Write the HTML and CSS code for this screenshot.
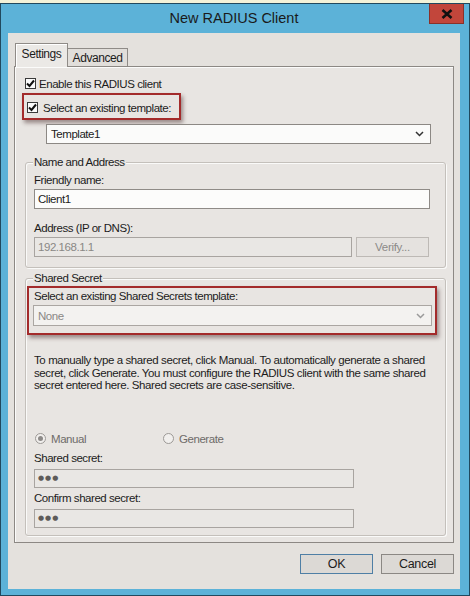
FILE: index.html
```html
<!DOCTYPE html>
<html>
<head>
<meta charset="utf-8">
<link rel="stylesheet" href="styles.css">
</head>
<body>
<div class="window">
  <div class="titlebar">
    <span class="title">New RADIUS Client</span>
    <div class="close"><svg width="12" height="10" viewBox="0 0 12 10"><path d="M1.5 1 L10.5 9 M10.5 1 L1.5 9" stroke="#111" stroke-width="2.6" fill="none"/></svg></div>
  </div>
  <div class="client">
    <div class="tabs">
      <div class="tab active">Settings</div>
      <div class="tab">Advanced</div>
    </div>
    <div class="panel">
      <div class="check row1"><span class="cb"><svg width="9" height="9" viewBox="0 0 9 9"><path d="M1 4.5 L3.5 7 L8 1.5" stroke="#111" stroke-width="2" fill="none"/></svg></span><span>Enable this RADIUS client</span></div>
      <div class="hl hl1">
        <div class="check"><span class="cb"><svg width="9" height="9" viewBox="0 0 9 9"><path d="M1 4.5 L3.5 7 L8 1.5" stroke="#111" stroke-width="2" fill="none"/></svg></span><span>Select an existing template:</span></div>
      </div>
      <div class="select sel1"><span>Template1</span><svg width="9" height="6" viewBox="0 0 9 6"><path d="M1 1 L4.5 4.5 L8 1" stroke="#333" stroke-width="1.5" fill="none"/></svg></div>

      <div class="group g1">
        <div class="legend">Name and Address</div>
        <div class="lbl lbl-first">Friendly name:</div>
        <div class="input in-name">Client1</div>
        <div class="lbl lbl-addr">Address (IP or DNS):</div>
        <div class="addr-row">
          <div class="input disabled in-addr">192.168.1.1</div>
          <div class="btn disabled verify">Verify...</div>
        </div>
      </div>

      <div class="group g2">
        <div class="legend">Shared Secret</div>
        <div class="hl hl2">
          <div class="lbl">Select an existing Shared Secrets template:</div>
          <div class="select disabled sel2"><span>None</span><svg width="9" height="6" viewBox="0 0 9 6"><path d="M1 1 L4.5 4.5 L8 1" stroke="#9a9a9a" stroke-width="1.5" fill="none"/></svg></div>
        </div>
        <p class="para">To manually type a shared secret, click Manual. To automatically generate a shared<br>secret, click Generate. You must configure the RADIUS client with the same shared<br>secret entered here. Shared secrets are case-sensitive.</p>
        <div class="radios">
          <div class="radio r-manual"><span class="rb on"></span><span>Manual</span></div>
          <div class="radio"><span class="rb"></span><span>Generate</span></div>
        </div>
        <div class="lbl lbl-secret">Shared secret:</div>
        <div class="input disabled in-secret"><span class="dots">●●●</span></div>
        <div class="lbl lbl-confirm">Confirm shared secret:</div>
        <div class="input disabled in-secret"><span class="dots">●●●</span></div>
      </div>
    </div>
    <div class="buttons">
      <div class="btn ok">OK</div>
      <div class="btn cancel">Cancel</div>
    </div>
  </div>
</div>
</body>
</html>
```
FILE: styles.css
```css
html, body {
  margin: 0;
  padding: 0;
}
body {
  background: #f3f2d8;
  font-family: "Liberation Sans", Arial, sans-serif;
  font-size: 11.5px;
  letter-spacing: -0.45px;
  color: #1c1c1c;
  width: 470px;
  height: 596px;
  overflow: hidden;
}
.window {
  margin-top: 3px;
  width: 470px;
  height: 593px;
  box-sizing: border-box;
  border: 1px solid #21495e;
  background: #5cb2d8;
  position: relative;
  display: flex;
  flex-direction: column;
  padding: 0 9px 6px 7px;
}
.titlebar {
  height: 29px;
  flex: none;
  display: flex;
  align-items: center;
  justify-content: center;
  padding-bottom: 1px;
  box-sizing: border-box;
}
.title {
  font-size: 14.5px;
  letter-spacing: 0;
  color: #1a1a1a;
}
.close {
  position: absolute;
  top: 0;
  right: 5px;
  width: 35px;
  height: 20px;
  box-sizing: border-box;
  background: #c2463b;
  border: 1px solid #8a3129;
  border-top: none;
  display: flex;
  align-items: center;
  justify-content: center;
}
.client {
  flex: 1;
  background: #e4e1dd;
  padding: 10px 6px 0 6px;
  display: flex;
  flex-direction: column;
}
.tabs {
  display: flex;
  align-items: flex-end;
  height: 23px;
  padding-left: 1px;
  position: relative;
  z-index: 1;
}
.tab {
  box-sizing: border-box;
  border: 1px solid #8f8b87;
  border-bottom: none;
  height: 18px;
  display: flex;
  align-items: center;
  justify-content: center;
  font-size: 12px;
  background: #e1deda;
  width: 61px;
  margin-left: -1px;
}
.tab.active {
  height: 24px;
  width: 53px;
  margin-bottom: -1px;
  margin-left: 0;
  background: #ebe9e6;
  padding-bottom: 4px;
  box-shadow: inset 1px 1px 0 #fff;
}
.panel {
  border: 1px solid #8c8884;
  box-shadow: inset 1px 1px 0 #fbfbfa;
  background: #e8e5e2;
  padding: 10px 6px 0 10px;
  height: 477px;
  box-sizing: border-box;
}
.check {
  display: flex;
  align-items: center;
  height: 13px;
  white-space: nowrap;
}
.cb {
  width: 11px;
  height: 11px;
  box-sizing: border-box;
  border: 1px solid #3a3a3a;
  background: #fbfbfb;
  display: flex;
  align-items: center;
  justify-content: center;
  margin-right: 3px;
  flex: none;
}
.hl {
  border: 2px solid #a32b2b;
  box-shadow: 2px 3px 4px rgba(60, 30, 30, 0.45);
  box-sizing: border-box;
}
.hl1 {
  margin-top: 3px;
  margin-left: -3px;
  width: 159px;
  height: 27px;
  padding: 6px 0 0 3px;
}
.hl1 .cb {
  margin-right: 5px;
}
.select {
  box-sizing: border-box;
  height: 20px;
  border: 1px solid #8c8884;
  background: #fbfbfa;
  display: flex;
  align-items: center;
  justify-content: space-between;
  padding: 0 6px 0 4px;
}
.sel1 {
  margin-top: 4px;
  margin-left: 21px;
  width: 385px;
}
.group {
  border: 1px solid #c4c0bb;
  border-radius: 3px;
  box-shadow: inset 1px 1px 0 #fafaf9, 1px 1px 0 #fafaf9;
  padding: 0 8px 9px 8px;
  width: 421px;
  box-sizing: border-box;
}
.g1 {
  margin-top: 18px;
  height: 106px;
}
.g2 {
  margin-top: 10px;
  height: 258px;
  padding-left: 1px;
}
.legend {
  margin-top: -7px;
  margin-left: -1px;
  height: 13px;
  line-height: 13px;
  background: #e8e5e2;
  display: table;
  padding: 0 1px;
}
.g2 .legend {
  margin-left: 6px;
}
.lbl {
  height: 13px;
  line-height: 13px;
  white-space: nowrap;
}
.lbl-first {
  margin-top: 5px;
}
.lbl-addr {
  margin-top: 13px;
}
.input {
  box-sizing: border-box;
  height: 20px;
  border: 1px solid #8f8b87;
  background: #fcfcfb;
  display: flex;
  align-items: center;
  padding-left: 3px;
  margin-top: 2px;
}
.input.disabled {
  background: #e9e7e4;
  border-color: #a8a4a0;
  color: #8a8785;
}
.in-name {
  width: 396px;
}
.addr-row {
  display: flex;
  gap: 4px;
  margin-top: 2px;
}
.addr-row .input {
  margin-top: 0;
}
.in-addr {
  width: 318px;
}
.btn {
  box-sizing: border-box;
  width: 73px;
  height: 20px;
  border: 1px solid #8b8884;
  background: #dcd9d5;
  display: flex;
  align-items: center;
  justify-content: center;
  font-size: 12.5px;
  letter-spacing: -0.3px;
}
.btn.disabled {
  border-color: #bdb9b5;
  background: #e5e2df;
  color: #8c8a88;
  font-size: 11.5px;
}
.hl2 {
  margin-top: 1px;
  width: 410px;
  height: 49px;
  padding: 2px 0 0 5px;
}
.sel2 {
  margin-top: 2px;
  margin-left: -1px;
  width: 399px;
  height: 21px;
  background: #f3f2f0;
  border-color: #aaa6a2;
  color: #8a8785;
}
.para {
  margin: 19px 0 0 7px;
  line-height: 12.5px;
  white-space: nowrap;
  letter-spacing: -0.4px;
}
.radios {
  display: flex;
  margin: 40px 0 0 8px;
  height: 14px;
  align-items: center;
  color: #6e6b69;
}
.radio {
  display: flex;
  align-items: center;
}
.r-manual {
  width: 128px;
}
.rb {
  width: 11px;
  height: 11px;
  box-sizing: border-box;
  border-radius: 50%;
  border: 1px solid #9c9996;
  background: #f1efed;
  margin-right: 5px;
  position: relative;
}
.rb.on::after {
  content: "";
  position: absolute;
  left: 2px;
  top: 2px;
  width: 5px;
  height: 5px;
  border-radius: 50%;
  background: #8d8a88;
}
.lbl-secret {
  margin: 6px 0 0 7px;
}
.lbl-confirm {
  margin: 4px 0 0 7px;
}
.in-secret {
  width: 320px;
  height: 19px;
  margin-top: 4px;
  margin-left: 7px;
}
.dots {
  font-family: "DejaVu Sans", sans-serif;
  font-size: 7px;
  letter-spacing: 1px;
  color: #5e5b59;
}
.buttons {
  display: flex;
  justify-content: flex-end;
  gap: 8px;
  margin-top: 11px;
}
.ok {
  border-color: #4f7fa5;
}
```
